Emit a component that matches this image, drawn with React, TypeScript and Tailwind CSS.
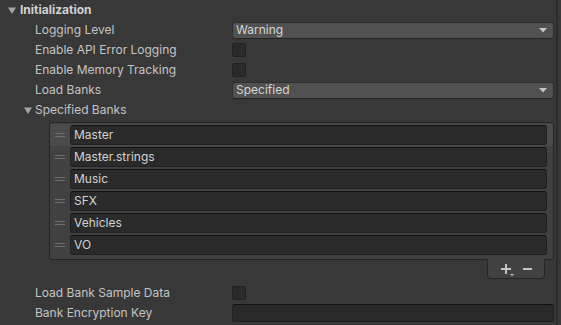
import React from 'react';

const Fold = () => (
  <svg width="8" height="7" viewBox="0 0 8 7" className="shrink-0">
    <path d="M0 0.5 L8 0.5 L4 7 Z" fill="#a4a4a4" />
  </svg>
);

const Row = ({ label, children }: { label: string; children?: React.ReactNode }) => (
  <div className="h-[20px] flex items-center">
    <div className="w-[232px] shrink-0 pl-[35px]">{label}</div>
    <div className="flex-1 flex items-center pr-[2px]">{children}</div>
  </div>
);

const Checkbox = () => (
  <div className="w-[14px] h-[14px] rounded-[2px] bg-[#2a2a2a] border border-[#212121]" />
);

const Popup = ({ value }: { value: string }) => (
  <div className="flex-1 h-[17px] rounded-[3px] bg-[#515151] border border-[#2f2f2f] border-b-[#242424] flex items-center justify-between pl-[3px] pr-[6px] text-[#d6d6d6]">
    <span>{value}</span>
    <svg width="8" height="5" viewBox="0 0 8 5">
      <path d="M0 0 L8 0 L4 4.5 Z" fill="#c4c4c4" />
    </svg>
  </div>
);

const banks = ['Master', 'Master.strings', 'Music', 'SFX', 'Vehicles', 'VO'];

export default function App() {
  return (
    <div
      className="w-[561px] h-[325px] overflow-hidden bg-[#383838] text-[#c4c4c4] text-[12px] leading-none flex"
      style={{ fontFamily: 'Inter, "Noto Sans", sans-serif' }}
    >
      <div className="w-[556px] shrink-0 flex flex-col">
        {/* Header */}
        <div className="h-[20px] flex items-center gap-[4px] pl-[8px]">
          <Fold />
          <span className="font-bold text-[#d2d2d2]">Initialization</span>
        </div>

        <Row label="Logging Level">
          <Popup value="Warning" />
        </Row>
        <Row label="Enable API Error Logging">
          <Checkbox />
        </Row>
        <Row label="Enable Memory Tracking">
          <Checkbox />
        </Row>
        <Row label="Load Banks">
          <Popup value="Specified" />
        </Row>

        {/* Specified Banks */}
        <div className="h-[20px] flex items-center gap-[3px] pl-[24px]">
          <Fold />
          <span>Specified Banks</span>
        </div>

        <div className="ml-[49px] mr-[2px] mt-[2px] flex flex-col">
          <div className="border border-[#262626] rounded-t-[3px] rounded-bl-[3px] bg-[#414141] pt-[1px] pb-[3px]">
            {banks.map((b, i) => (
              <div
                key={b}
                className={`h-[22px] flex items-center pr-[6px] ${i === 0 ? 'bg-[#4a4a4a]' : ''}`}
              >
                <div className="w-[20px] shrink-0 flex flex-col items-center gap-[2px]">
                  <div className="w-[10px] h-[1px] bg-[#6e6e6e]" />
                  <div className="w-[10px] h-[1px] bg-[#6e6e6e]" />
                </div>
                <div className="flex-1 h-[20px] rounded-[3px] bg-[#2a2a2a] border border-[#212121] border-t-[#111111] flex items-center pl-[3px] text-[#d2d2d2]">
                  {b}
                </div>
              </div>
            ))}
          </div>
          <div className="self-end mr-[9px] -mt-[1px] w-[58px] h-[20px] bg-[#414141] border border-[#262626] border-t-0 rounded-b-[4px] flex items-center justify-center gap-[12px] text-[#c4c4c4]">
            <div className="relative">
              <svg width="10" height="10" viewBox="0 0 10 10">
                <path d="M5 0 V10 M0 5 H10" stroke="#c4c4c4" strokeWidth="2" />
              </svg>
              <svg width="4" height="2" viewBox="0 0 4 2" className="absolute left-[9px] top-[10px]">
                <path d="M0 0 H4 L2 2 Z" fill="#c4c4c4" />
              </svg>
            </div>
            <svg width="9" height="2" viewBox="0 0 9 2">
              <path d="M0 1 H9" stroke="#c4c4c4" strokeWidth="2" />
            </svg>
          </div>
        </div>

        <div className="h-[4px]" />
        <Row label="Load Bank Sample Data">
          <Checkbox />
        </Row>
        <Row label="Bank Encryption Key">
          <div className="flex-1 h-[18px] rounded-[3px] bg-[#2a2a2a] border border-[#212121] border-t-[#111111]" />
        </Row>
      </div>
      <div className="w-[2px] shrink-0 bg-[#2c2c2c]" />
    </div>
  );
}
